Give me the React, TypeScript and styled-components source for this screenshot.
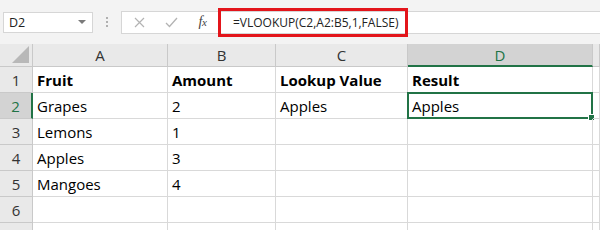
import styled, { createGlobalStyle } from 'styled-components';

const GlobalStyle = createGlobalStyle`
  html, body {
    margin: 0;
    padding: 0;
    background: #ffffff;
  }
  body {
    font-family: "Open Sans", "Noto Sans", sans-serif;
  }
`;

const Window = styled.div`
  width: 600px;
  height: 230px;
  overflow: hidden;
  background: #ffffff;
`;

const Toolbar = styled.div`
  display: flex;
  align-items: center;
  height: 44px;
  padding: 0 0 0 3px;
  background: #f3f3f3;
  box-sizing: border-box;
`;

const NameBox = styled.div`
  display: flex;
  align-items: center;
  justify-content: space-between;
  width: 90px;
  height: 21px;
  box-sizing: border-box;
  padding: 0 6px 0 5px;
  background: #ffffff;
  border: 1px solid #d6d6d6;
  font-size: 12.5px;
  color: #222222;
`;

const Caret = styled.span`
  width: 0;
  height: 0;
  border-left: 4px solid transparent;
  border-right: 4px solid transparent;
  border-top: 4px solid #7a7a7a;
`;

const Grip = styled.div`
  display: flex;
  flex-direction: column;
  gap: 2px;
  width: 28px;
  align-items: center;
`;

const GripDot = styled.span`
  width: 2px;
  height: 2px;
  background: #b0b0b0;
`;

const FormulaBar = styled.div`
  flex: 1;
  display: flex;
  align-items: center;
  height: 21px;
  background: #ffffff;
  border: 1px solid #d6d6d6;
  border-right: none;
`;

const BarButton = styled.span<{ $w: number }>`
  display: flex;
  align-items: center;
  justify-content: center;
  width: ${(p) => p.$w}px;
  height: 100%;
`;

const Fx = styled.span`
  font-family: "Liberation Serif", serif;
  font-style: italic;
  font-size: 14px;
  color: #444444;
  letter-spacing: -0.5px;
`;

const FxSub = styled.span`
  font-size: 11px;
`;

const Highlight = styled.div`
  display: flex;
  align-items: center;
  width: 190px;
  height: 29px;
  box-sizing: border-box;
  border: 3px solid #e3151b;
  padding-left: 12px;
  font-size: 12px;
  color: #222222;
  white-space: nowrap;
`;

const Sheet = styled.div`
  display: grid;
  grid-template-columns: 33px 135px 108px 132px 185px 1fr;
  grid-template-rows: 23px repeat(7, 26px);
`;

const Corner = styled.div`
  background: #e9e9e9;
  border-right: 1px solid #c9c9c9;
  border-bottom: 1px solid #c9c9c9;
  display: flex;
  align-items: flex-end;
  justify-content: flex-end;
  padding: 0 3px 3px 0;
`;

const CornerTriangle = styled.span`
  width: 0;
  height: 0;
  border-left: 17px solid transparent;
  border-bottom: 17px solid #b8b8b8;
`;

const ColHead = styled.div<{ $active?: boolean }>`
  display: flex;
  align-items: center;
  justify-content: center;
  box-sizing: border-box;
  font-size: 15px;
  background: ${(p) => (p.$active ? '#d3d3d3' : '#e9e9e9')};
  color: ${(p) => (p.$active ? '#217346' : '#333333')};
  border-right: 1px solid #c9c9c9;
  border-bottom: ${(p) => (p.$active ? '2px solid #217346' : '1px solid #c9c9c9')};
`;

const RowHead = styled.div<{ $active?: boolean }>`
  display: flex;
  align-items: center;
  justify-content: center;
  box-sizing: border-box;
  font-size: 15px;
  background: ${(p) => (p.$active ? '#d3d3d3' : '#e9e9e9')};
  color: ${(p) => (p.$active ? '#217346' : '#333333')};
  border-right: ${(p) => (p.$active ? '2px solid #217346' : '1px solid #c9c9c9')};
  border-bottom: 1px solid #c9c9c9;
`;

const Cell = styled.div<{ $bold?: boolean; $selected?: boolean }>`
  position: relative;
  display: flex;
  align-items: center;
  box-sizing: border-box;
  padding-left: 4px;
  font-size: 15px;
  font-weight: ${(p) => (p.$bold ? 700 : 400)};
  color: #000000;
  border-right: 1px solid #d9d9d9;
  border-bottom: 1px solid #d9d9d9;
  white-space: nowrap;
  ${(p) =>
    p.$selected &&
    `
    border: 2px solid #217346;
    margin: -1px 0 0 -1px;
    padding-left: 3px;
  `}
`;

const FillHandle = styled.span`
  position: absolute;
  right: -4px;
  bottom: -4px;
  width: 5px;
  height: 5px;
  background: #217346;
  border: 1px solid #ffffff;
`;

const rows: string[][] = [
  ['Fruit', 'Amount', 'Lookup Value', 'Result', ''],
  ['Grapes', '2', 'Apples', 'Apples', ''],
  ['Lemons', '1', '', '', ''],
  ['Apples', '3', '', '', ''],
  ['Mangoes', '4', '', '', ''],
  ['', '', '', '', ''],
  ['', '', '', '', ''],
];

const cols = ['A', 'B', 'C', 'D', ''];

const CrossIcon = () => (
  <svg width="11" height="11" viewBox="0 0 11 11">
    <path d="M1 1 L10 10 M10 1 L1 10" stroke="#b3b3b3" strokeWidth="1.2" fill="none" />
  </svg>
);

const CheckIcon = () => (
  <svg width="13" height="11" viewBox="0 0 13 11">
    <path d="M1 6 L4.5 9.5 L12 1" stroke="#b3b3b3" strokeWidth="1.3" fill="none" />
  </svg>
);

export default function App() {
  return (
    <Window>
      <GlobalStyle />
      <Toolbar>
        <NameBox>
          <span>D2</span>
          <Caret />
        </NameBox>
        <Grip>
          <GripDot />
          <GripDot />
          <GripDot />
        </Grip>
        <FormulaBar>
          <BarButton $w={34}>
            <CrossIcon />
          </BarButton>
          <BarButton $w={31}>
            <CheckIcon />
          </BarButton>
          <BarButton $w={31}>
            <Fx>
              f<FxSub>x</FxSub>
            </Fx>
          </BarButton>
          <Highlight>=VLOOKUP(C2,A2:B5,1,FALSE)</Highlight>
        </FormulaBar>
      </Toolbar>
      <Sheet>
        <Corner>
          <CornerTriangle />
        </Corner>
        {cols.map((c, i) => (
          <ColHead key={i} $active={c === 'D'}>
            {c}
          </ColHead>
        ))}
        {rows.map((r, ri) => [
          // the 7th row is cut off by the window edge, so its number is not visible
          <RowHead key={`h${ri}`} $active={ri === 1}>
            {ri < 6 ? ri + 1 : ''}
          </RowHead>,
          ...r.map((v, ci) => {
            const selected = ri === 1 && ci === 3;
            return (
              <Cell key={`${ri}-${ci}`} $bold={ri === 0} $selected={selected}>
                {v}
                {selected && <FillHandle />}
              </Cell>
            );
          }),
        ])}
      </Sheet>
    </Window>
  );
}
